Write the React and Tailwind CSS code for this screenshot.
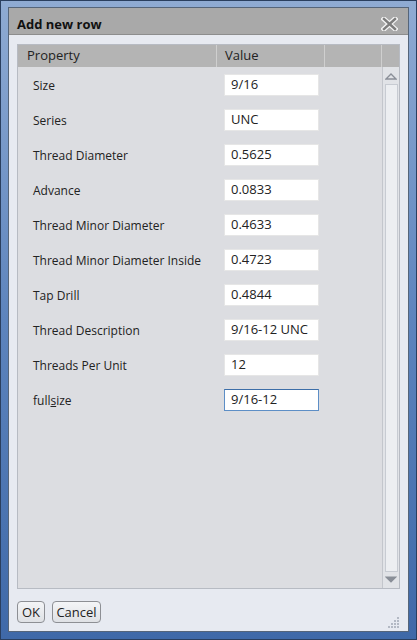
import React from "react";

const rows = [
  { label: "Size", value: "9/16" },
  { label: "Series", value: "UNC" },
  { label: "Thread Diameter", value: "0.5625" },
  { label: "Advance", value: "0.0833" },
  { label: "Thread Minor Diameter", value: "0.4633" },
  { label: "Thread Minor Diameter Inside", value: "0.4723" },
  { label: "Tap Drill", value: "0.4844" },
  { label: "Thread Description", value: "9/16-12 UNC" },
  { label: "Threads Per Unit", value: "12" },
  { label: "fullsize", value: "9/16-12", focused: true },
];

const CloseIcon = () => (
  <svg width="17" height="14" viewBox="0 0 17 14">
    <path d="M3 2 L14 12 M14 2 L3 12" stroke="#f4f4f4" strokeWidth="5" strokeLinecap="square" />
    <path d="M3 2 L14 12 M14 2 L3 12" stroke="#7d7d7d" strokeWidth="2.4" strokeLinecap="square" />
  </svg>
);

const Grip = () => (
  <svg width="12" height="12" viewBox="0 0 12 12">
    {[
      [9, 1], [9, 4], [6, 4], [9, 7], [6, 7], [3, 7], [9, 10], [6, 10], [3, 10], [0, 10],
    ].map(([x, y], i) => (
      <rect key={i} x={x} y={y} width="2" height="2" fill="#b3b9c4" />
    ))}
  </svg>
);

const Label = ({ text }) =>
  text === "fullsize" ? (
    <span>
      full<span className="underline">s</span>ize
    </span>
  ) : (
    <span>{text}</span>
  );

const App = () => {
  return (
    <div
      className="w-[417px] h-[640px] flex flex-col bg-gradient-to-b from-[#8fabd3] via-[#5d84bd] to-[#3f69a8] border border-[#2a3f5f] pl-[7px] pr-[7px] pt-[6px] pb-[7px] overflow-hidden"
      style={{ fontFamily: '"Open Sans", "Noto Sans", Arial, sans-serif' }}
    >
      <div className="flex-1 flex flex-col border border-[#55657a] bg-[#e7eaf1]">
        {/* title bar */}
        <div className="h-[27px] flex items-start justify-between bg-[#a9a9a9] border-b border-[#8d8d8d] pl-[8px] pr-[10px]">
          <span className="mt-[7px] text-[13px] font-bold text-[#111] leading-[18px]">Add new row</span>
          <div className="mt-[9px]">
            <CloseIcon />
          </div>
        </div>

        <div className="flex-1 flex flex-col pt-[9px] px-[8px]">
          {/* grid */}
          <div className="h-[545px] flex flex-col border border-[#b7bbc3] bg-[#dcdde1]">
            <div className="h-[22px] flex bg-[#b4b4b4] text-[13px] text-[#222]">
              <div className="w-[199px] border-r border-[#cfcfcf] pl-[9px] flex items-center">Property</div>
              <div className="w-[108px] border-r border-[#cfcfcf] pl-[8px] flex items-center">Value</div>
              <div className="w-[57px] border-r border-[#cfcfcf]"></div>
              <div className="flex-1"></div>
            </div>
            <div className="flex-1 flex">
              <div className="w-[364px] flex flex-col">
                {rows.map((r) => (
                  <div key={r.label} className="h-[35px] flex items-center text-[12px] text-[#222]">
                    <div className="w-[206px] pl-[15px] pt-[2px]">
                      <Label text={r.label} />
                    </div>
                    <div
                      className={`w-[95px] h-[22px] bg-white flex items-center pl-[6px] text-[13px] ${
                        r.focused ? "border border-[#5d8ec6] border-t-[#3d6ea8]" : "border border-[#e6e6e6]"
                      }`}
                    >
                      {r.value}
                    </div>
                  </div>
                ))}
              </div>
              {/* scrollbar */}
              <div className="flex-1 flex flex-col items-center border-l border-[#c3c6cc] bg-[#e1e3e7] pt-[5px] pb-[4px]">
                <svg width="12" height="8" viewBox="0 0 12 8">
                  <path d="M1 7 L6 2 L11 7 Z" fill="none" stroke="#8a8f98" strokeWidth="1.4" />
                </svg>
                <div className="flex-1 w-[13px] mt-[4px] mb-[4px] border border-[#c7cbd2] bg-[#eceef1]"></div>
                <svg width="12" height="8" viewBox="0 0 12 8">
                  <path d="M1 1 L6 6 L11 1 Z" fill="#8a8f98" stroke="#8a8f98" strokeWidth="1.2" />
                </svg>
              </div>
            </div>
          </div>

          {/* buttons */}
          <div className="flex items-end justify-between pt-[12px] flex-1 pb-[3px]">
            <div className="flex gap-[7px] self-start">
              <button className="h-[22px] w-[28px] rounded-[4px] border border-[#8d8f94] bg-gradient-to-b from-[#f4f5f7] to-[#dfe1e5] text-[13px] text-[#222] leading-none">
                OK
              </button>
              <button className="h-[22px] w-[49px] rounded-[4px] border border-[#8d8f94] bg-gradient-to-b from-[#f4f5f7] to-[#dfe1e5] text-[13px] text-[#222] leading-none">
                Cancel
              </button>
            </div>
            <Grip />
          </div>
        </div>
      </div>
    </div>
  );
};

export default App;
